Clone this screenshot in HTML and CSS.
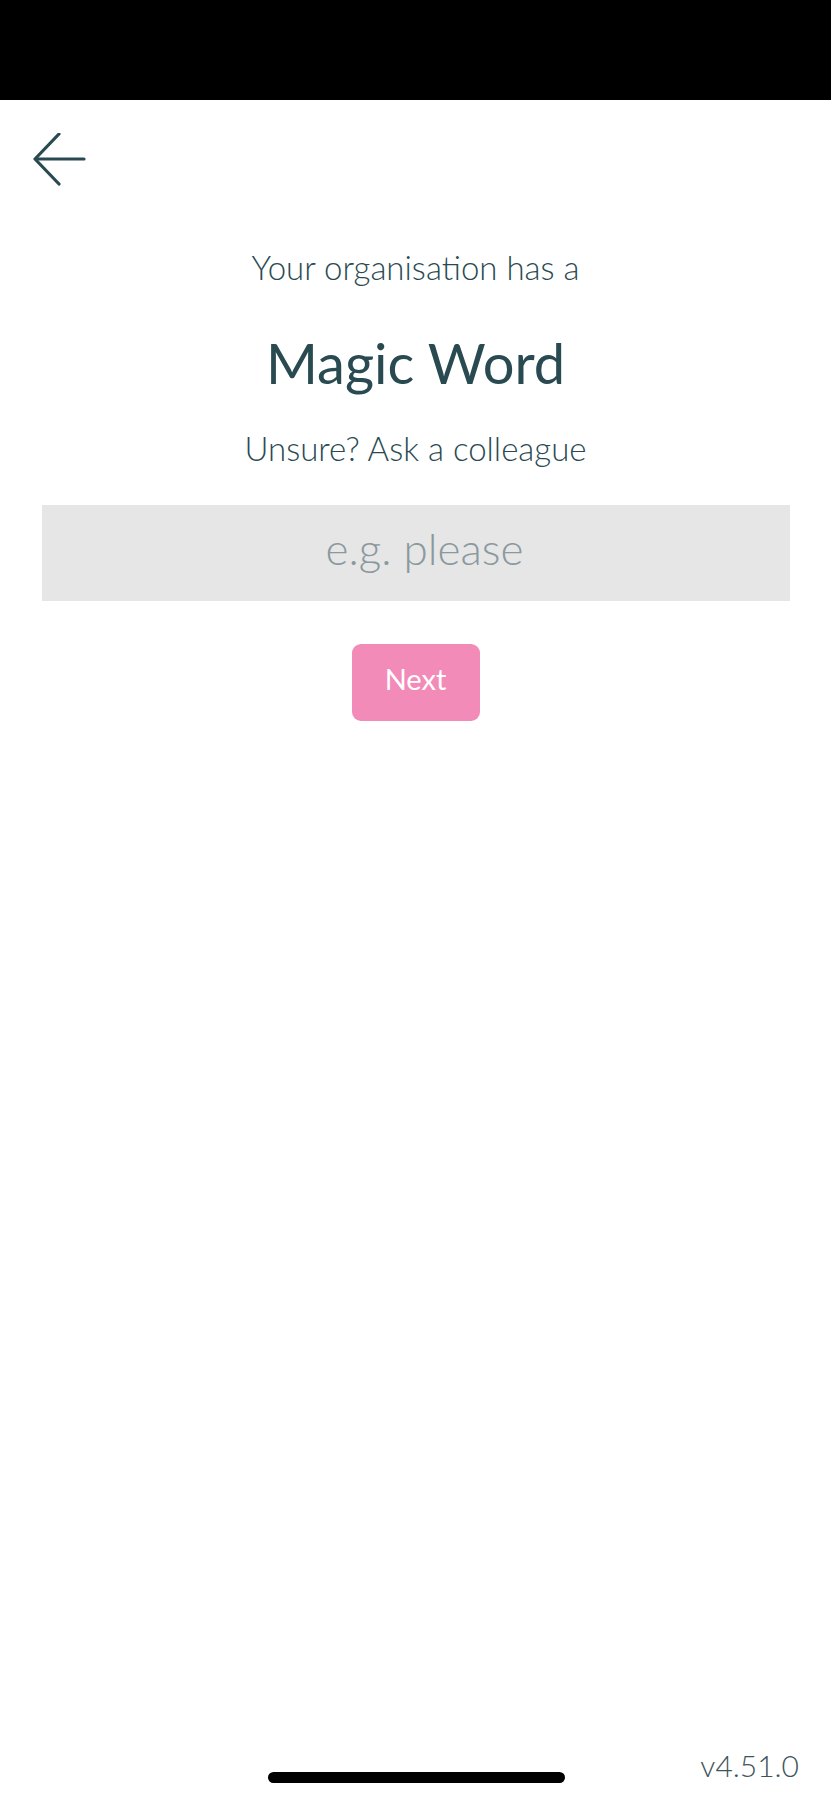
FILE: index.html
```html
<!DOCTYPE html>
<html lang="en">
<head>
<meta charset="utf-8">
<title>Magic Word</title>
<link rel="stylesheet" href="styles.css">
</head>
<body>
<div class="screen">
  <div class="statusbar"></div>
  <header class="topbar">
    <button class="back" aria-label="Back">
      <svg width="54" height="54" viewBox="0 0 54 54" fill="none" stroke="#2a4a52" stroke-width="3.2" stroke-linecap="round" stroke-linejoin="round">
        <path d="M3 26 H51"/>
        <path d="M26 1 L2 26 L26 51"/>
      </svg>
    </button>
  </header>
  <main class="content">
    <p class="intro">Your organisation has a</p>
    <h1 class="title">Magic Word</h1>
    <p class="hint">Unsure? Ask a colleague</p>
    <input class="field" type="text" placeholder="e.g. please">
    <button class="next">Next</button>
  </main>
  <footer class="footer">
    <span class="version">v4.51.0</span>
  </footer>
  <div class="home-indicator"></div>
</div>
</body>
</html>
```
FILE: styles.css
```css
* { box-sizing: border-box; }
html, body { margin: 0; padding: 0; background: #fff; }
body { font-family: Lato, "Open Sans", sans-serif; color: #2a4a52; }

.screen {
  position: relative;
  width: 831px;
  min-height: 1800px;
  display: flex;
  flex-direction: column;
}

.statusbar { height: 100px; background: #000; }

.topbar { padding: 33px 0 0 33px; height: 120px; }
.back {
  display: block;
  padding: 0;
  border: 0;
  background: none;
  width: 54px;
  height: 54px;
}
.back svg { display: block; }

.content {
  display: flex;
  flex-direction: column;
  align-items: center;
  padding: 0 41px;
}

.intro {
  margin: 31px 0 0;
  font-size: 33px;
  line-height: 33px;
  font-weight: 300;
}
.title {
  margin: 51px 0 0;
  font-size: 56px;
  line-height: 56px;
  font-weight: 400;
}
.hint {
  margin: 41px 0 0;
  font-size: 33px;
  line-height: 33px;
  font-weight: 300;
}
.field {
  margin-top: 40px;
  width: 748px;
  height: 96px;
  padding: 0 0 10px 18px;
  border: 0;
  background: #e6e6e6;
  font-family: inherit;
  font-size: 44px;
  font-weight: 300;
  text-align: center;
  color: #2a4a52;
  outline: none;
}
.field::placeholder { color: #8a999e; }

.next {
  margin-top: 43px;
  width: 128px;
  height: 77px;
  padding: 0 0 8px;
  border: 0;
  border-radius: 9px;
  background: #f38bb9;
  color: #fff;
  font-family: inherit;
  font-size: 29px;
  font-weight: 400;
}

.footer {
  margin-top: auto;
  display: flex;
  justify-content: flex-end;
  padding: 0 32px 20px 0;
}
.version {
  font-size: 30px;
  line-height: 30px;
  font-weight: 300;
  color: #3e545b;
}

.home-indicator {
  position: absolute;
  left: 268px;
  top: 1772px;
  width: 297px;
  height: 11px;
  border-radius: 6px;
  background: #000;
}
```
